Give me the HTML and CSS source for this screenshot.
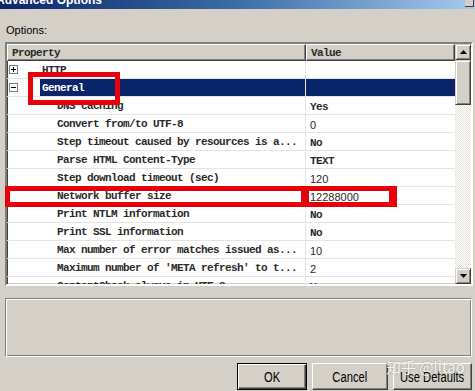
FILE: index.html
```html
<html>
	<head>
		<link rel="stylesheet" href="styles.css">
	</head>
	<body>
		<div class="titlebar">
			<span class="title">Advanced Options</span>
			<span class="help"></span>
		</div>
		<div class="opts">Options:</div>
		<div class="list">
			<div class="grid">
				<div class="head">
					<div class="hcell c1">Property</div>
					<div class="hcell c2">Value</div>
				</div>
				<div class="row">
					<div class="c1"><span class="tog plus"></span><span class="name top">HTTP</span></div>
					<div class="c2"></div>
				</div>
				<div class="row sel">
					<div class="c1"><span class="tog minus"></span><span class="name top">General</span></div>
					<div class="c2"></div>
				</div>
				<div class="row">
					<div class="c1"><span class="name sub">DNS caching</span></div>
					<div class="c2">Yes</div>
				</div>
				<div class="row">
					<div class="c1"><span class="name sub">Convert from/to UTF-8</span></div>
					<div class="c2 num">0</div>
				</div>
				<div class="row">
					<div class="c1"><span class="name sub">Step timeout caused by resources is a...</span></div>
					<div class="c2">No</div>
				</div>
				<div class="row">
					<div class="c1"><span class="name sub">Parse HTML Content-Type</span></div>
					<div class="c2">TEXT</div>
				</div>
				<div class="row">
					<div class="c1"><span class="name sub">Step download timeout (sec)</span></div>
					<div class="c2 num">120</div>
				</div>
				<div class="row">
					<div class="c1"><span class="name sub">Network buffer size</span></div>
					<div class="c2 num">12288000</div>
				</div>
				<div class="row">
					<div class="c1"><span class="name sub">Print NTLM information</span></div>
					<div class="c2">No</div>
				</div>
				<div class="row">
					<div class="c1"><span class="name sub">Print SSL information</span></div>
					<div class="c2">No</div>
				</div>
				<div class="row">
					<div class="c1"><span class="name sub">Max number of error matches issued as...</span></div>
					<div class="c2 num">10</div>
				</div>
				<div class="row">
					<div class="c1"><span class="name sub">Maximum number of 'META refresh' to t...</span></div>
					<div class="c2 num">2</div>
				</div>
				<div class="row">
					<div class="c1"><span class="name sub">ContentCheck always in UTF-8</span></div>
					<div class="c2">Yes</div>
				</div>
			</div>
			<div class="scroll">
				<div class="sbtn"><svg width="7" height="4" viewBox="0 0 7 4"><path d="M3.5 0 L7 4 L0 4 Z" fill="#000"/></svg></div>
				<div class="thumb"></div>
				<div class="track"></div>
				<div class="sbtn"><svg width="7" height="4" viewBox="0 0 7 4"><path d="M0 0 L7 0 L3.5 4 Z" fill="#000"/></svg></div>
			</div>
		</div>
		<div class="panel"></div>
		<div class="buttons">
			<div class="btn def"><span>OK</span></div>
			<div class="btn cancel"><span>Cancel</span></div>
			<div class="btn defaults"><span>Use Defaults</span></div>
		</div>

		<div class="mark mark-general"></div>
		<div class="mark mark-net"></div>
		<div class="mark mark-val"></div>
		<div class="watermark">知乎 @litao</div>
	</body>
</html>
```
FILE: styles.css
```css
body {
	margin: 0;
	width: 475px;
	height: 391px;
	overflow: hidden;
	background: #d4d0c8;
	font-family: "Liberation Sans", Arial, sans-serif;
	position: relative;
}
.titlebar {
	height: 9px;
	overflow: hidden;
	background: linear-gradient(to right, #0a246a, #3a6ea5 50%, #a6caf0);
	position: relative;
}
.title {
	display: block;
	margin: -7px 0 0 -4px;
	font-weight: bold;
	font-size: 12px;
	line-height: 14px;
	color: #fff;
}
.help {
	position: absolute;
	right: 1px;
	top: 0;
	width: 8px;
	height: 6px;
	background: #d4d0c8;
	border-right: 1px solid #404040;
	border-bottom: 1px solid #404040;
}
.opts {
	font-size: 11px;
	line-height: 13px;
	padding: 15px 0 0 6px;
	height: 18px;
	color: #000;
}
.list {
	margin-left: 5px;
	width: 464px;
	height: 240px;
	border: 2px solid;
	border-color: #808080 #fff #fff #808080;
	box-shadow: inset 1px 1px #404040, inset -1px -1px #d4d0c8;
	display: flex;
	background: #fff;
}
.grid {
	width: 448px;
	overflow: hidden;
	font-family: "Liberation Mono", "Courier New", monospace;
	font-weight: bold;
	font-size: 11px;
	letter-spacing: -0.6px;
	color: #2a2a2a;
}
.head {
	display: flex;
	height: 17px;
}
.hcell {
	background: #d4d0c8;
	border: 1px solid;
	border-color: #fff #404040 #404040 #fff;
	box-shadow: inset -1px -1px #808080;
	line-height: 16px;
	padding-left: 4px;
	box-sizing: border-box;
}
.head .c1 {
	width: 299px;
}
.head .c2 {
	flex: 1;
}
.row {
	display: flex;
	height: 18px;
	box-sizing: border-box;
	border-bottom: 1px solid #e4e4e4;
	line-height: 20px;
	overflow: hidden;
}
.row .c1 {
	width: 299px;
	display: flex;
	align-items: center;
	padding-left: 2px;
	box-sizing: border-box;
	border-right: 1px solid #e4e4e4;
	white-space: nowrap;
}
.row .c2 {
	flex: 1;
	padding-left: 4px;
}
.c2.num {
	font-family: "Liberation Sans", Arial, sans-serif;
	font-weight: normal;
	font-size: 11px;
	letter-spacing: 0;
}
.tog {
	width: 7px;
	height: 7px;
	border: 1px solid #808080;
	background: #fff;
	position: relative;
}
.tog::before {
	content: "";
	position: absolute;
	left: 1px;
	top: 3px;
	width: 5px;
	height: 1px;
	background: #000;
}
.tog.plus::after {
	content: "";
	position: absolute;
	left: 3px;
	top: 1px;
	width: 1px;
	height: 5px;
	background: #000;
}
.name.top {
	margin-left: 22px;
	padding: 0 2px;
}
.name.sub {
	margin-left: 48px;
}
.sel .name {
	flex: 1;
	background: #0a246a;
	color: #fff;
	height: 17px;
	line-height: 19px;
}
.sel .c2 {
	background: #0a246a;
}
.scroll {
	width: 16px;
	display: flex;
	flex-direction: column;
}
.sbtn, .thumb {
	background: #d4d0c8;
	border: 1px solid;
	border-color: #d4d0c8 #404040 #404040 #d4d0c8;
	box-shadow: inset 1px 1px #fff, inset -1px -1px #808080;
	box-sizing: border-box;
}
.sbtn {
	height: 16px;
	display: flex;
	align-items: center;
	justify-content: center;
}
.thumb {
	height: 45px;
}
.track {
	flex: 1;
	background: repeating-conic-gradient(#fff 0 25%, #e4e1da 0 50%) 0 0 / 2px 2px;
}
.panel {
	margin: 12px 0 0 5px;
	width: 467px;
	height: 59px;
	box-sizing: border-box;
	border: 1px solid;
	border-color: #808080 #fff #fff #808080;
	box-shadow: inset 1px 1px #fff, inset -1px -1px #808080;
}
.buttons {
	display: flex;
	justify-content: flex-end;
	gap: 5px;
	padding: 6px 3px 0 0;
}
.btn {
	height: 27px;
	box-sizing: border-box;
	background: #d4d0c8;
	border: 1px solid;
	border-color: #fff #404040 #404040 #fff;
	box-shadow: inset -1px -1px #808080;
	display: flex;
	align-items: center;
	justify-content: center;
	font-size: 14px;
	color: #000;
	white-space: nowrap;
}
.btn span {
	display: inline-block;
	transform: scaleX(0.8);
}
.btn.def {
	width: 70px;
	border: 1px solid #000;
	box-shadow: inset 1px 1px #fff, inset -1px -1px #404040, inset -2px -2px #808080;
}
.btn.cancel {
	width: 76px;
}
.btn.defaults {
	width: 79px;
}
.mark {
	position: absolute;
	border: 5px solid #e8000a;
	box-sizing: border-box;
}
.mark-general {
	left: 28px;
	top: 72px;
	width: 92px;
	height: 33px;
}
.mark-net {
	left: 5px;
	top: 186px;
	width: 301px;
	height: 21px;
}
.mark-val {
	left: 304px;
	top: 186px;
	width: 93px;
	height: 21px;
	border-right-width: 8px;
}
.watermark {
	position: absolute;
	left: 386px;
	top: 356px;
	font-family: "Noto Sans CJK SC", sans-serif;
	font-size: 15px;
	color: rgba(255, 255, 255, 0.9);
	text-shadow: 0 0 2px rgba(0, 0, 0, 0.35);
	white-space: nowrap;
}
```
